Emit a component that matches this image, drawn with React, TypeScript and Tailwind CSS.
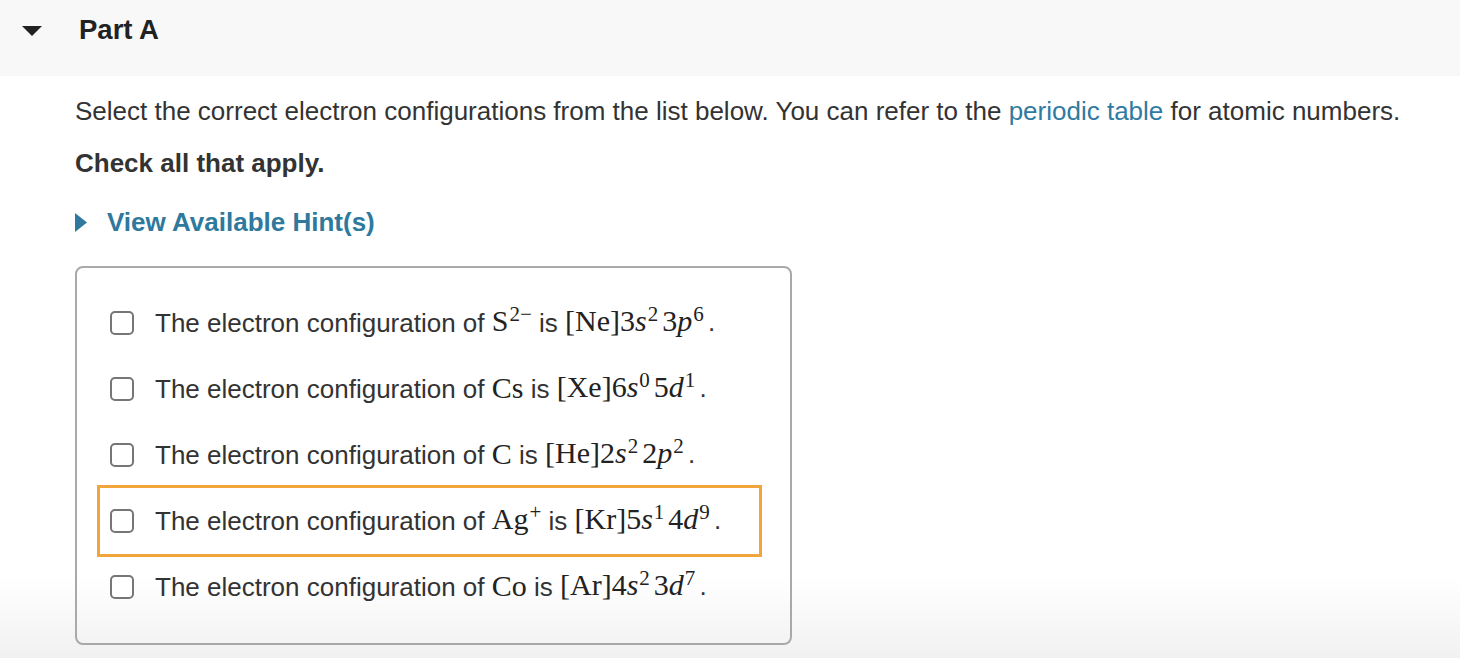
import React from "react";

interface Option {
  id: number;
  species: React.ReactNode;
  config: React.ReactNode;
  highlighted?: boolean;
}

const Sup = ({ children }: { children: React.ReactNode }) => (
  <span className="ml-[1px] align-[0.5em] text-[0.7em] not-italic leading-none">{children}</span>
);

const I = ({ children }: { children: React.ReactNode }) => (
  <span className="italic">{children}</span>
);

const Math = ({ children }: { children: React.ReactNode }) => (
  <span className="font-['Liberation_Serif',serif] text-[30px] leading-none text-[#222]">
    {children}
  </span>
);

const options: Option[] = [
  {
    id: 1,
    species: (
      <>
        S<Sup>2−</Sup>
      </>
    ),
    config: (
      <>
        [Ne]3<I>s</I>
        <Sup>2</Sup>
        <span className="ml-[4px]">3</span>
        <I>p</I>
        <Sup>6</Sup>
      </>
    ),
  },
  {
    id: 2,
    species: <>Cs</>,
    config: (
      <>
        [Xe]6<I>s</I>
        <Sup>0</Sup>
        <span className="ml-[4px]">5</span>
        <I>d</I>
        <Sup>1</Sup>
      </>
    ),
  },
  {
    id: 3,
    species: <>C</>,
    config: (
      <>
        [He]2<I>s</I>
        <Sup>2</Sup>
        <span className="ml-[4px]">2</span>
        <I>p</I>
        <Sup>2</Sup>
      </>
    ),
  },
  {
    id: 4,
    species: (
      <>
        Ag<Sup>+</Sup>
      </>
    ),
    config: (
      <>
        [Kr]5<I>s</I>
        <Sup>1</Sup>
        <span className="ml-[4px]">4</span>
        <I>d</I>
        <Sup>9</Sup>
      </>
    ),
    highlighted: true,
  },
  {
    id: 5,
    species: <>Co</>,
    config: (
      <>
        [Ar]4<I>s</I>
        <Sup>2</Sup>
        <span className="ml-[4px]">3</span>
        <I>d</I>
        <Sup>7</Sup>
      </>
    ),
  },
];

export default function App() {
  return (
    <div className="flex h-[658px] w-[1460px] flex-col overflow-hidden bg-white font-['Liberation_Sans',Arial,sans-serif] text-[#333]">
      {/* Part header */}
      <div className="flex h-[76px] shrink-0 items-center gap-[37px] bg-[#f8f8f8] pb-[16px] pl-[22px]">
        <svg width="20" height="10" viewBox="0 0 20 10" className="mt-[2px]">
          <polygon points="0,0 20,0 10,10" fill="#222" />
        </svg>
        <h2 className="text-[27.5px] font-bold text-[#222]">Part A</h2>
      </div>

      {/* Body */}
      <div className="flex flex-1 flex-col items-start bg-[linear-gradient(to_bottom,#ffffff_0%,#ffffff_86%,#f1f1f1_100%)] pl-[75px] pt-[17px]">
        <p className="text-[26px] leading-[36px]">
          Select the correct electron configurations from the list below. You can refer to the{" "}
          <a className="text-[#2f7ba1]">periodic table</a> for atomic numbers.
        </p>
        <p className="mt-[16px] text-[26px] font-bold leading-[36px]">Check all that apply.</p>

        <button className="mt-[23px] flex items-center gap-[20px] text-[26px] font-bold leading-[36px] text-[#2e799c]">
          <svg width="12" height="19" viewBox="0 0 12 19">
            <polygon points="0,0 12,9.5 0,19" fill="#2e799c" />
          </svg>
          View Available Hint(s)
        </button>

        <div className="mt-[26px] flex w-[717px] flex-col rounded-[8px] border-2 border-[#a9a9a9] pb-[23px] pl-[23px] pr-[31px] pt-[22px]">
          {options.map((opt) => (
            <label
              key={opt.id}
              className={`flex h-[66px] items-center gap-[21px] pl-[10px] ${
                opt.highlighted ? "outline-[3px] outline-solid outline-[#f2a53a]" : ""
              }`}
            >
              <span className="h-[24px] w-[24px] shrink-0 rounded-[5px] border-2 border-[#767676] bg-white" />
              <span className="whitespace-nowrap pb-[6px] text-[26px] leading-none">
                The electron configuration of <Math>{opt.species}</Math> is <Math>{opt.config}</Math>{" "}
                <span className="ml-[-3px]">.</span>
              </span>
            </label>
          ))}
        </div>
      </div>
    </div>
  );
}
